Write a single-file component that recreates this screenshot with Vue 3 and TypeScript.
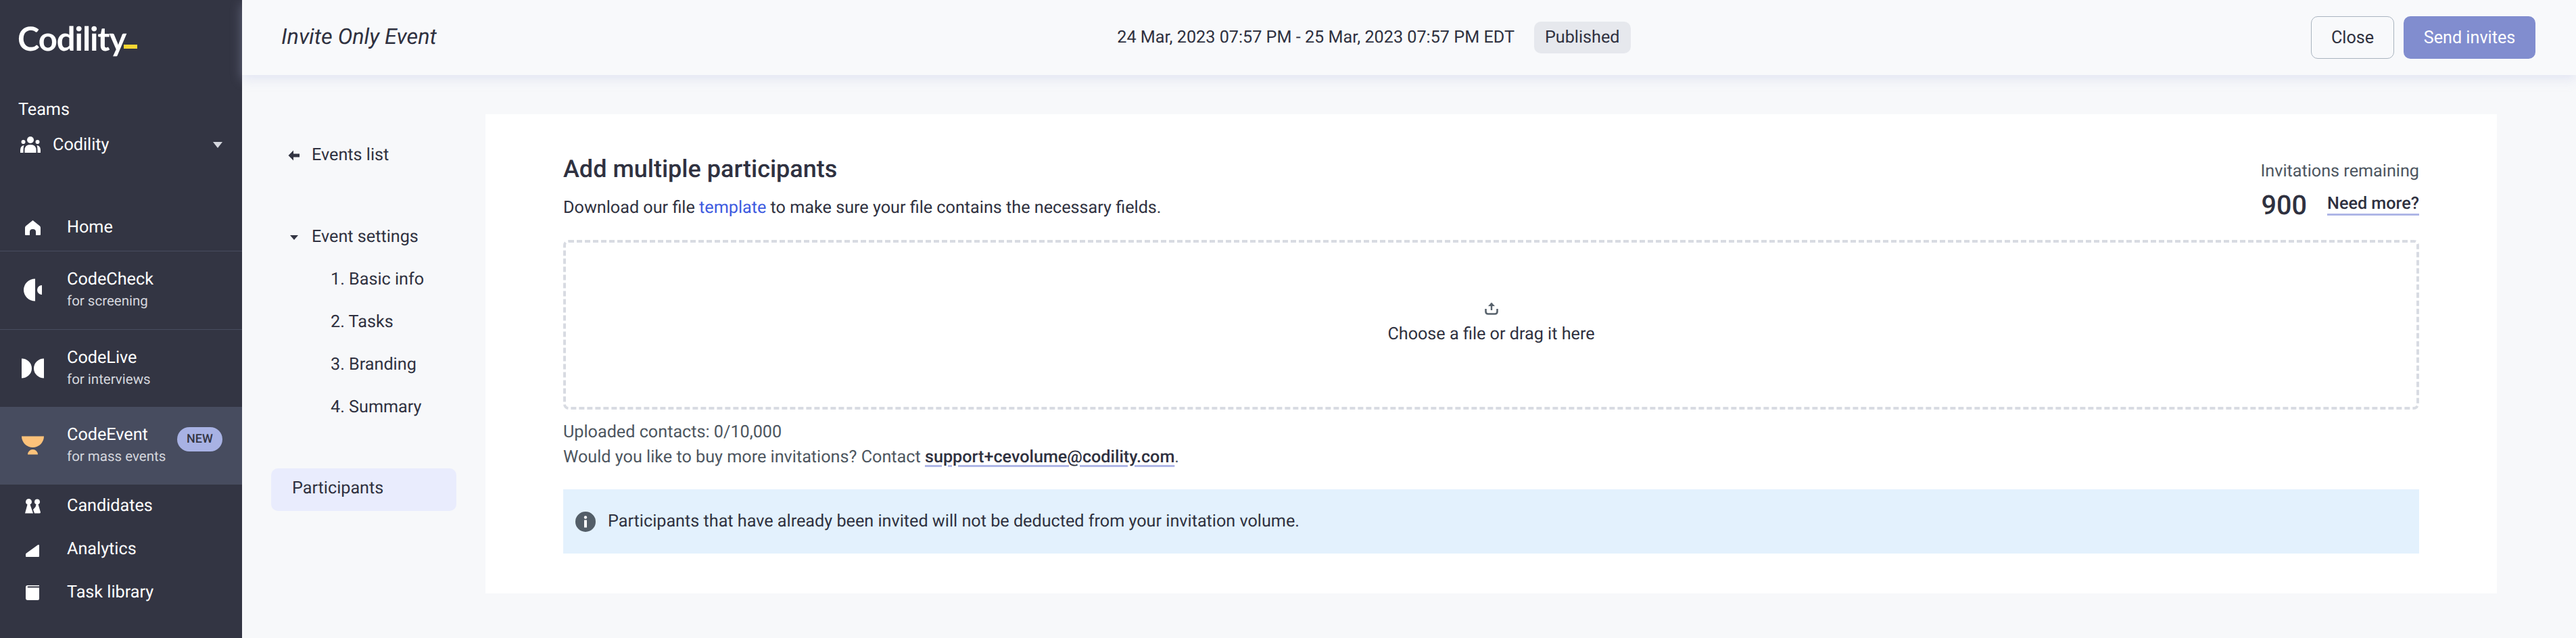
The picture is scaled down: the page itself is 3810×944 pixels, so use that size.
<script setup lang="ts">
interface NavItem {
    label: string
    sub?: string
    icon: string
    badge?: string
    active?: boolean
    tall?: boolean
    divider?: boolean
}

const icons: Record<string, string> = {
    home: 'M20.5 9 L31 17.5 Q32 18.5 32 20 V30 Q32 31 31 31 H25 V26 Q25 22 20.5 22 Q16 22 16 26 V31 H10 Q9 31 9 30 V20 Q9 18.5 10 17.5Z',
    check: 'M24 3.5 A17 16.5 0 0 0 24 36.5Z M34 13 A7 7 0 0 0 34 27Z',
    live: 'M4 5.5 A15 14.5 0 0 1 4 34.5Z M37 5.5 A15 14.5 0 0 0 37 34.5Z',
    event: 'M4 6.5 H37 A16.5 16.5 0 0 1 4 6.5Z M13 33.5 A7.5 7.5 0 0 1 28 33.5Z',
    candidates:
        'M14.5 9 A4.5 4.5 0 0 1 16.5 17.5 L21 30.5 H9 L12.5 17.5 A4.5 4.5 0 0 1 14.5 9Z M27 9.5 A4 4 0 0 1 28.5 17.2 L32 29 Q32 30.5 30 30.5 H23 L21 25 L24.5 21 L25.5 17.2 A4 4 0 0 1 27 9.5Z',
    analytics: 'M30 14 V30 Q30 31 29 31 H11 Q10 31 10 30 V27.5 Q10 26 11 25.5 L28 13.2 Q30 12.5 30 14Z',
    library:
        'M10 12 Q10 9 13 9 H30 V10.5 H14 Q12.5 10.5 12.5 11.5 Q12.5 12.5 14 12.5 H30 V29 Q30 31 28 31 H13 Q10 31 10 28Z',
}

const navItems: NavItem[] = [
    { label: 'Home', icon: 'home', divider: true },
    { label: 'CodeCheck', sub: 'for screening', icon: 'check', tall: true, divider: true },
    { label: 'CodeLive', sub: 'for interviews', icon: 'live', tall: true },
    { label: 'CodeEvent', sub: 'for mass events', icon: 'event', badge: 'NEW', tall: true, active: true },
    { label: 'Candidates', icon: 'candidates' },
    { label: 'Analytics', icon: 'analytics' },
    { label: 'Task library', icon: 'library' },
]

const steps = ['1. Basic info', '2. Tasks', '3. Branding', '4. Summary']
</script>

<template>
    <div class="page">
        <aside class="sidebar">
            <div class="logo">Codility<span class="logo__bar"></span></div>
            <div class="teams">
                <div class="teams__label">Teams</div>
                <div class="teams__row">
                    <svg class="teams__icon" width="30" height="24" viewBox="0 0 30 24" fill="#fff">
                        <circle cx="15" cy="5" r="5" />
                        <circle cx="4.5" cy="8" r="3" />
                        <circle cx="25.5" cy="8" r="3" />
                        <path d="M6.5 24 V20 Q6.5 12 15 12 Q23.5 12 23.5 20 V24Z" />
                        <path d="M0 24 V20 Q0 14 5.5 13 Q4.5 16 4.5 20 V24Z" />
                        <path d="M30 24 V20 Q30 14 24.5 13 Q25.5 16 25.5 20 V24Z" />
                    </svg>
                    <span>Codility</span>
                    <span class="teams__caret"></span>
                </div>
            </div>
            <nav class="nav">
                <div
                    v-for="item in navItems"
                    :key="item.label"
                    class="nav__item"
                    :class="{
                        'nav__item--tall': item.tall,
                        'nav__item--active': item.active,
                        'nav__item--divider': item.divider,
                    }"
                >
                    <svg class="nav__icon" width="40" height="40" viewBox="0 0 40 40">
                        <path :d="icons[item.icon]" :fill="item.active ? '#fdc27a' : '#fff'" />
                    </svg>
                    <div class="nav__text">
                        <div class="nav__label">{{ item.label }}</div>
                        <div v-if="item.sub" class="nav__sub">{{ item.sub }}</div>
                    </div>
                    <span v-if="item.badge" class="nav__badge">{{ item.badge }}</span>
                </div>
            </nav>
        </aside>

        <div class="main">
            <header class="topbar">
                <div class="topbar__title">Invite Only Event</div>
                <div class="topbar__center">
                    <span>24 Mar, 2023 07:57 PM - 25 Mar, 2023 07:57 PM EDT</span>
                    <span class="status">Published</span>
                </div>
                <div class="topbar__actions">
                    <button class="btn btn--ghost">Close</button>
                    <button class="btn btn--primary">Send invites</button>
                </div>
            </header>

            <div class="content">
                <div class="subnav">
                    <div class="subnav__row">
                        <svg class="subnav__glyph" width="18" height="16" viewBox="0 0 18 16" fill="#333543">
                            <path d="M8 0.5 V5.5 H17 V10.5 H8 V15.5 L0.5 8Z" />
                        </svg>
                        Events list
                    </div>
                    <div class="subnav__row subnav__row--group">
                        <span class="subnav__caret"></span>
                        Event settings
                    </div>
                    <div v-for="step in steps" :key="step" class="subnav__row subnav__row--step">{{ step }}</div>
                    <div class="subnav__pill">Participants</div>
                </div>

                <section class="panel">
                    <div class="panel__head">
                        <div>
                            <h1 class="panel__title">Add multiple participants</h1>
                            <p class="panel__lead">
                                Download our file <a class="link">template</a> to make sure your file contains the
                                necessary fields.
                            </p>
                        </div>
                        <div class="quota">
                            <div class="quota__label">Invitations remaining</div>
                            <div class="quota__row">
                                <span class="quota__num">900</span>
                                <a class="quota__more">Need more?</a>
                            </div>
                        </div>
                    </div>

                    <div class="drop">
                        <svg width="20" height="19" viewBox="0 0 20 19" fill="none">
                            <path d="M10 2 V12" stroke="#58626c" stroke-width="2.4" />
                            <path d="M10 0.5 L15 6 H5Z" fill="#58626c" />
                            <path d="M1.5 10 V14 Q1.5 17.5 5 17.5 H15 Q18.5 17.5 18.5 14 V10" stroke="#58626c" stroke-width="2.6" />
                        </svg>
                        <div class="drop__text">Choose a file or drag it here</div>
                    </div>

                    <div class="notes">
                        <div>Uploaded contacts: 0/10,000</div>
                        <div>
                            Would you like to buy more invitations? Contact
                            <a class="notes__mail">support+cevolume@codility.com</a>.
                        </div>
                    </div>

                    <div class="info">
                        <svg width="30" height="30" viewBox="0 0 30 30">
                            <circle cx="15" cy="15" r="15" fill="#535e68" />
                            <circle cx="15" cy="8.5" r="2.2" fill="#fff" />
                            <rect x="13" y="12.5" width="4" height="11" fill="#fff" />
                        </svg>
                        <span>Participants that have already been invited will not be deducted from your invitation volume.</span>
                    </div>
                </section>
            </div>
        </div>
    </div>
</template>

<style>
body {
    margin: 0;
    background: #f7f8fa;
}
</style>

<style scoped>
.page {
    display: flex;
    width: 3810px;
    height: 944px;
    overflow: hidden;
    background: #f7f8fa;
    color: #2f3140;
    font-family: Roboto, 'Liberation Sans', sans-serif;
    font-size: 25.2px;
    text-rendering: geometricPrecision;
}

.sidebar {
    flex: 0 0 358px;
    background: #333543;
    color: #fff;
}

.logo {
    display: flex;
    align-items: flex-end;
    height: 50px;
    padding: 32px 0 0 26px;
    font-family: Lato, sans-serif;
    font-size: 49px;
    font-weight: 700;
    line-height: 50px;
    letter-spacing: -1.1px;
}

.logo__bar {
    width: 20px;
    height: 6px;
    margin: 0 0 10px -3px;
    background: #f8d633;
}

.teams {
    padding: 59px 0 0 27px;
}

.teams__label {
    line-height: 44px;
}

.teams__row {
    display: flex;
    align-items: center;
    height: 44px;
    margin-top: 7px;
    padding-right: 29px;
}

.teams__icon {
    margin: 0 18px 0 3px;
}

.teams__caret {
    margin-left: auto;
    border-left: 7px solid transparent;
    border-right: 7px solid transparent;
    border-top: 9px solid #d5d7de;
}

.nav {
    margin-top: 67px;
}

.nav__item {
    position: relative;
    display: flex;
    align-items: center;
    height: 64px;
}

.nav__item--divider {
    border-bottom: 1px solid #474c5f;
}

.nav__item:first-child {
    height: 68px;
}

.nav__item--tall {
    height: 114.5px;
}

.nav__item--active {
    background: #474c5f;
}

.nav__icon {
    flex: none;
    margin: 0 31px 0 28px;
}

.nav__label {
    line-height: 36px;
}

.nav__sub {
    margin-top: -2px;
    color: #d5d7de;
    font-size: 20.5px;
    line-height: 32px;
}

.nav__badge {
    position: absolute;
    top: 30px;
    right: 29px;
    width: 67px;
    height: 36px;
    border-radius: 18px;
    background: #a8b2e4;
    color: #333543;
    font-size: 18px;
    font-weight: 500;
    line-height: 36px;
    text-align: center;
}

.main {
    flex: 1;
    min-width: 0;
}

.topbar {
    position: relative;
    display: flex;
    justify-content: space-between;
    align-items: center;
    height: 111px;
    padding: 0 60px 0 58px;
    background: #f8f9fb;
    box-shadow: 0 6px 16px rgba(190, 196, 228, 0.35);
}

.topbar__title {
    margin-top: -3px;
    font-size: 32.4px;
    font-style: italic;
}

.topbar__center {
    display: flex;
    align-items: center;
    gap: 29px;
}

.status {
    padding: 0 16px;
    border-radius: 10px;
    background: #e6e8ed;
    line-height: 47px;
}

.topbar__actions {
    display: flex;
    gap: 14px;
}

.btn {
    height: 63px;
    padding: 0;
    border-radius: 10px;
    font-family: inherit;
    font-size: 25.2px;
}

.btn--ghost {
    width: 123px;
    border: 1px solid #a9b4bf;
    background: transparent;
    color: #2f3140;
}

.btn--primary {
    width: 195px;
    border: none;
    background: #818dcf;
    color: #fff;
}

.content {
    display: flex;
    padding: 58px 0 0 43px;
}

.subnav {
    flex: 0 0 274px;
    margin-right: 43px;
    padding-top: 29px;
}

.subnav__row {
    display: flex;
    align-items: center;
    height: 63px;
    padding-left: 25px;
    white-space: nowrap;
}

.subnav__row--group {
    margin-top: 58px;
}

.subnav__row--step {
    padding-left: 88px;
}

.subnav__glyph {
    margin-right: 17px;
}

.subnav__caret {
    margin: 2px 20px 0 3px;
    border-left: 6px solid transparent;
    border-right: 6px solid transparent;
    border-top: 7px solid #333543;
}

.subnav__pill {
    height: 63px;
    margin-top: 59px;
    padding-left: 31px;
    border-radius: 10px;
    background: #e9ecfd;
    line-height: 60px;
}

.panel {
    flex: 0 0 2975px;
    box-sizing: border-box;
    height: 709px;
    padding: 59px 115px 0;
    background: #fff;
}

.panel__head {
    display: flex;
    justify-content: space-between;
}

.panel__title {
    margin: 0;
    font-size: 36px;
    font-weight: 500;
    line-height: 44px;
}

.panel__lead {
    margin: 16px 0 0;
    line-height: 40px;
}

.link {
    color: #3d5ae0;
}

.quota {
    margin-top: 6px;
    text-align: right;
}

.quota__label {
    color: #4d5660;
    line-height: 40px;
}

.quota__row {
    display: flex;
    justify-content: flex-end;
    align-items: center;
    gap: 30px;
    height: 44px;
    margin-top: 7px;
}

.quota__num {
    font-size: 39.6px;
    font-weight: 500;
}

.quota__more {
    border-bottom: 3px solid #aeb6e6;
    font-size: 25.2px;
    font-weight: 500;
    line-height: 28px;
}

.drop {
    display: flex;
    flex-direction: column;
    align-items: center;
    justify-content: center;
    box-sizing: border-box;
    height: 251px;
    margin-top: 27px;
    border: 4px dashed #d8dbe2;
    border-radius: 8px;
}

.drop__text {
    margin-top: 9px;
    line-height: 40px;
}

.notes {
    margin-top: 15px;
    color: #4d5660;
    line-height: 37px;
}

.notes__mail {
    color: #2f3140;
    font-weight: 500;
    text-decoration: underline;
    text-decoration-color: #aeb6e6;
    text-decoration-thickness: 3px;
    text-underline-offset: 4px;
}

.info {
    display: flex;
    align-items: center;
    gap: 18px;
    height: 95px;
    margin-top: 29px;
    padding-left: 18px;
    background: #e3f1fd;
}
</style>
